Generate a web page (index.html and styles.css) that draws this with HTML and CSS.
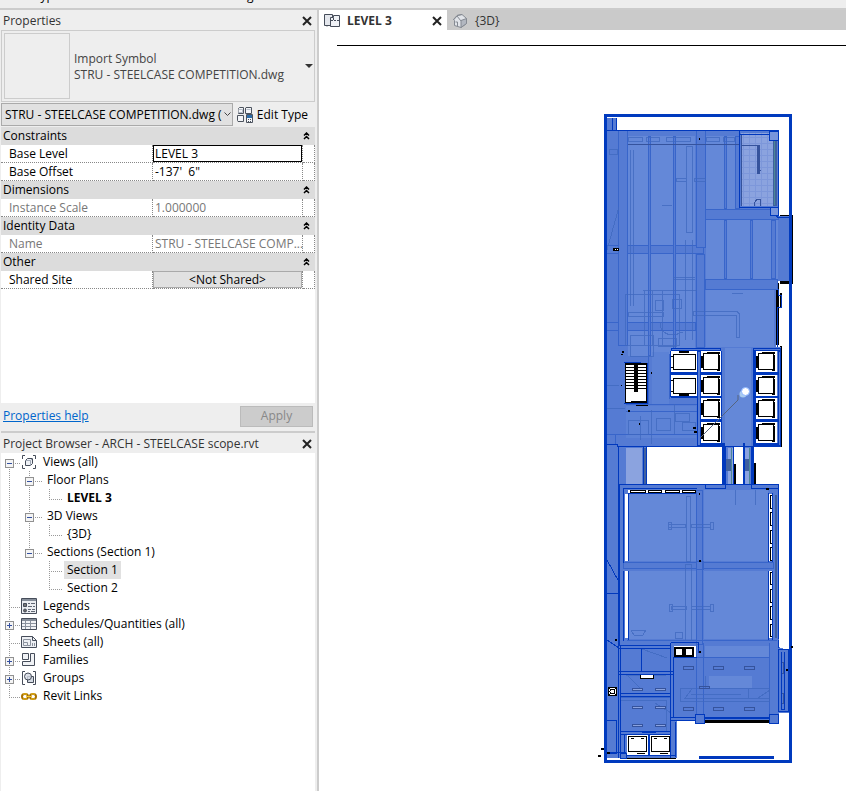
FILE: index.html
```html
<!DOCTYPE html>
<html lang="en">
<head>
<meta charset="utf-8">
<title>LEVEL 3</title>
<link rel="stylesheet" href="styles.css">
</head>
<body>
<header class="ribbon"><span>Type</span><span>ing</span></header>
<div class="workspace">
<aside class="side">
  <section class="properties">
    <div class="bar"><h2>Properties</h2><button class="close" aria-label="Close properties"><svg viewBox="0 0 10 10"><path d="M1 1 9 9M9 1 1 9"/></svg></button></div>
    <button class="preview">
      <span class="thumb"></span>
      <span class="preview-text">Import Symbol<br>STRU - STEELCASE COMPETITION.dwg</span>
      <svg class="arrow" viewBox="0 0 8 4"><path d="M0 0h8L4 4z"/></svg>
    </button>
    <div class="type-row">
      <select class="type-select" aria-label="Type"><option>STRU - STEELCASE COMPETITION.dwg (</option></select>
      <button class="edit-type">
        <svg viewBox="0 0 16 16" fill="#f4f6f9" stroke="#4c535e"><path d="M1.500 1.500l1-1h4v6h-5zM9 .5h5.500v6H8.500V1zM.5 8.500h6v6H1l-.5-1z"/><path d="M1.500 2.500h4v3h-4M9.500 2.500h4" stroke="#b8bfca"/><path d="M9.500 7.500h6v8h-6z"/><path d="M10 8h5v3h-5z" fill="#2d6ca8" stroke="none"/><path d="M11 12.500h1m1 0h1m-3 2h1m1 0h1"/></svg>
        Edit Type</button>
    </div>
    <table class="grid">
      <colgroup><col class="c-name"><col class="c-value"><col class="c-end"></colgroup>
      <tbody>
      <tr class="group"><th colspan="2">Constraints</th><td><button aria-label="Collapse"><svg viewBox="0 0 7 8"><path d="M1 3.500 3.500 1 6 3.500M1 7l2.500-2.500L6 7"/></svg></button></td></tr>
      <tr><th><label for="level">Base Level</label></th><td><input id="level" class="active" value="LEVEL 3"></td><td></td></tr>
      <tr><th><label for="offset">Base Offset</label></th><td><input id="offset" value="-137'&nbsp; 6&quot;"></td><td></td></tr>
      <tr class="group"><th colspan="2">Dimensions</th><td><button aria-label="Collapse"><svg viewBox="0 0 7 8"><path d="M1 3.500 3.500 1 6 3.500M1 7l2.500-2.500L6 7"/></svg></button></td></tr>
      <tr class="dim"><th>Instance Scale</th><td><span>1.000000</span></td><td></td></tr>
      <tr class="group"><th colspan="2">Identity Data</th><td><button aria-label="Collapse"><svg viewBox="0 0 7 8"><path d="M1 3.500 3.500 1 6 3.500M1 7l2.500-2.500L6 7"/></svg></button></td></tr>
      <tr class="dim"><th>Name</th><td><span>STRU - STEELCASE COMP...</span></td><td></td></tr>
      <tr class="group"><th colspan="2">Other</th><td><button aria-label="Collapse"><svg viewBox="0 0 7 8"><path d="M1 3.500 3.500 1 6 3.500M1 7l2.500-2.500L6 7"/></svg></button></td></tr>
      <tr><th>Shared Site</th><td><button class="shared">&lt;Not Shared&gt;</button></td><td></td></tr>
      </tbody>
    </table>
    <div class="blank"></div>
    <div class="foot"><a href="#help">Properties help</a><button class="apply" disabled>Apply</button></div>
  </section>
  <section class="browser">
    <div class="bar"><h2>Project Browser - ARCH - STEELCASE scope.rvt</h2><button class="close" aria-label="Close project browser"><svg viewBox="0 0 10 10"><path d="M1 1 9 9M9 1 1 9"/></svg></button></div>
    <ul class="tree">
      <li class="row"><span class="cell first"><button class="box minus" aria-label="Collapse"></button></span><svg class="icon" viewBox="0 0 16 16"><path d="M4 1.500H1.500V5M1.500 11v3.500H4M12 1.500h2.500V5m0 6v3.500H12"/><path d="m4.500 6.500 2-2h5v5l-2 2h-5z" fill="#eef1f6"/><path d="M4.500 6.500h5v5m0-5 2-2" stroke="#a3abb8"/></svg><span class="label">Views (all)</span></li>
      <li class="row"><span class="cell v"></span><span class="cell wide v"><button class="box minus" aria-label="Collapse"></button></span><span class="label">Floor Plans</span></li>
      <li class="row"><span class="cell v"></span><span class="cell v"></span><span class="cell wide end"></span><span class="label"><b>LEVEL 3</b></span></li>
      <li class="row"><span class="cell v"></span><span class="cell wide v"><button class="box minus" aria-label="Collapse"></button></span><span class="label">3D Views</span></li>
      <li class="row"><span class="cell v"></span><span class="cell v"></span><span class="cell wide end"></span><span class="label">{3D}</span></li>
      <li class="row"><span class="cell v"></span><span class="cell wide end"><button class="box minus" aria-label="Collapse"></button></span><span class="label">Sections (Section 1)</span></li>
      <li class="row"><span class="cell v"></span><span class="cell"></span><span class="cell wide tee"></span><span class="label picked">Section 1</span></li>
      <li class="row"><span class="cell v"></span><span class="cell"></span><span class="cell wide end"></span><span class="label">Section 2</span></li>
      <li class="row"><span class="cell tee"></span><svg class="icon" viewBox="0 0 16 16"><path d="M.5.500h15v15H.5z" fill="#eceef2"/><path d="M1 1h14v2H1z" fill="#858d99" stroke="none"/><path d="M2.500 5.500h3v3h-3z" fill="#777"/><circle cx="4" cy="12.500" r="1.500" fill="#666"/><path d="M7 5.500h2m1 0h4M7 8.500h4m1 0h2M7 11.500h3m1 0h3M7 13.500h2m1 0h4" stroke="#606774"/></svg><span class="label">Legends</span></li>
      <li class="row"><span class="cell v"><button class="box plus" aria-label="Expand"></button></span><svg class="icon" viewBox="0 0 16 16"><path d="M.5 2.500h15v11H.5z" fill="#f2f3f6"/><path d="M1 3h14v2H1z" fill="#858d99" stroke="none"/><path d="M1 7.500h14M1 10.500h14M4.500 5v8M9.500 5v8" stroke="#8b929e"/></svg><span class="label">Schedules/Quantities (all)</span></li>
      <li class="row"><span class="cell tee"></span><svg class="icon" viewBox="0 0 16 16"><path d="M.5 2.500h11l4 4v7H.5z" fill="#eef0f4"/><path d="M11.500 2.500v4h4"/><path d="M2.500 5.500h7v6h-3v-3h-4zM2.500 8.500v3h4M11.500 9v3M13.500 9v3" stroke="#8b929e"/></svg><span class="label">Sheets (all)</span></li>
      <li class="row"><span class="cell v"><button class="box plus" aria-label="Expand"></button></span><svg class="icon" viewBox="0 0 16 16"><path d="M1.500 1.500h6v6h-6zM9.500 1.500h4v12h-12v-4h8z" fill="#f0f2f5"/></svg><span class="label">Families</span></li>
      <li class="row"><span class="cell v"><button class="box plus" aria-label="Expand"></button></span><svg class="icon" viewBox="0 0 16 16"><path d="M4 1.500H1.500v13H4M12 1.500h2.500v13H12"/><path d="M6.500 6.500h6v6h-6z" fill="#d4dae3"/><circle cx="7" cy="6.500" r="3.500" fill="#d4dae3" fill-opacity=".8"/></svg><span class="label">Groups</span></li>
      <li class="row"><span class="cell end"></span><svg class="icon" viewBox="0 0 16 16"><rect x="1" y="6" width="6" height="5" rx="2.500" stroke="#a87000" stroke-width="2"/><rect x="9" y="6" width="6" height="5" rx="2.500" stroke="#a87000" stroke-width="2"/><path d="M2 6h4M10 6h4M2 11h4M10 11h4M5 8.500h6" stroke="#f6c829"/></svg><span class="label">Revit Links</span></li>
    </ul>
  </section>
</aside>
<main class="view">
  <nav class="tabs">
    <div class="tab current"><svg class="icon" viewBox="0 0 16 16"><path d="M.5 1.500h8v11h-8z" fill="#e4e7ed"/><path d="M6.500 4.500h3v-2h6v11h-9z" fill="#f0f2f6"/><path d="M7 7.500h2m1 0h2m1 0h2M9.500 5v2M3 12.500v1" /></svg><button class="tab-name"><b>LEVEL 3</b></button><button class="close" aria-label="Close view"><svg viewBox="0 0 10 10"><path d="M1 1 9 9M9 1 1 9"/></svg></button></div>
    <div class="tab"><svg class="icon house" viewBox="0 0 16 16"><path d="M1.500 6.500 5 2.500l5-1 4.500 4v5L9 14.500l-6.500-2v-5z" fill="#e1e4e9"/><path d="m9 7.500 5.500-2v5L9 14.500z" fill="#b2b7c0"/><path d="m1.500 7 3.500-4 4 5M5 2.500l5-1M5.500 13V9H3.500"/></svg><button class="tab-name">{3D}</button></div>
  </nav>
  <svg class="plan" viewBox="319 30 527 761" preserveAspectRatio="xMinYMin meet" shape-rendering="crispEdges" role="img" aria-label="Level 3 floor plan">
    <defs>
      <pattern id="tile" width="6" height="6" patternUnits="userSpaceOnUse"><path d="M0 5.500h6M5.500 0v6" stroke="#7d97da" fill="none"/></pattern>
      <pattern id="tread" width="10" height="3" patternUnits="userSpaceOnUse"><path d="M0 1.500h10" stroke="#000"/></pattern>
      <g id="car"><path d="M0 0h21v22H0z" fill="#fff"/><path d="M2.500 2.500h15v16h-15zM17.500 4.500h1v13h-1M6 1.500h10" fill="none" stroke="#000"/><path d="M0 5h2v12H0zM16 1h3v2h-3zM16 18h3v2h-3z"/></g>
      <g id="lift"><path d="M0 0h21v20H0z" fill="#fff"/><path d="M1.500 1.500h18v15h-18zM4 3.500h3M14 3.500h3M10 18.500h8" fill="none" stroke="#000"/></g>
      <g id="wide-car"><path d="M0 0h26v21H0z" fill="#fff"/><path d="M2.500 3.500h22v15h-22zM0 5.500h3M0 16.500h3" fill="none" stroke="#000"/></g>
    </defs>
    <path d="M337 45.500h520" stroke="#000"/>
    <!-- black edges behind the slab -->
    <path d="M780 215h13v69h-13zM775 283h4v62h-4zM780 293h2v15h-2zM780 346h2v102h-2zM647 445h24v4h-24zM676 721v38h-50v-2h49v-36zM705 719h66v4h-66z"/>
    <!-- slabs -->
    <path d="M607 118h10v12h162v86h12v65h-15v66h5v100h-28v38h26v162l10 4v62h-10v7H677v38h-70z" fill="#557bd3"/>
    <path d="M647 447h76v37h-76zM733 447h11v37h-11zM755 447h34v37h-34z" fill="#fff"/>
    <g fill="#6488d8">
      <path d="M628 136h20v220h-20zM650 136h23v220h-23zM675 136h20v218h-20zM706 136h30v210h-30zM706 217h72v62h-72zM706 290h68v57h-68zM725 348h26v98h-26z"/>
      <path d="M628 494h68v67h-68zM704 490h64v71h-64zM628 571h68v68h-68zM704 571h64v68h-64zM705 646h64v11h-64zM709 676h43v12h-43z"/>
    </g>
    <path d="M626 406h70v32h-70zM652 352h17v52h-17z" fill="#5c82d6"/>
    <g fill="#8ba3df"><path d="M741 133h35v73h-35zM626 448h16v36h-16zM728 448h5v36h-5zM745 448h5v36h-5z"/></g>
    <path d="M741 133h34v73h-34z" fill="url(#tile)"/>
    <!-- floor beams and faint linework -->
    <g fill="#557bd3" stroke="#3865ca">
      <path d="M606.500 245.500h97v8h-97zM606.500 322.500h89v8h-89zM705.500 209.500h73v10h-73zM705.500 279.500h72v10h-72z"/>
      <path d="M696.500 130.500h9v117h-9zM696.500 254.500h8v93h-8zM696.500 490.500h6v154h-6zM623.500 562.500h73v6h-73zM703.500 562.500h70v6h-70zM696.500 561.500h7v8h-7z"/>
      <path d="M618.500 130.500h9v215h-9zM648.500 136.500h2v219h-2zM673.500 136.500h2v219h-2zM724.500 136.500h2v72h-2zM724.500 220.500h2v58h-2zM750.500 220.500h2v58h-2zM735.500 136.500h4v72h-4zM771.500 220.500h4v58h-4z"/>
    </g>
    <g fill="none" stroke="#3865ca"><path d="M648.500 356v48M626 404.500h71M626 411.500h71M607 434.500h90M615.500 434v10M669.500 354v45M696.500 643v73M703.500 643v73M769.500 643v73M627 640.500h150M675 657.500h95M621 697.500h50"/></g>
    <g fill="none" stroke="#3f68bf" stroke-opacity=".75">
      <path d="M628.500 137.500h14v4h-14zM646.500 137.500h13v4h-13zM666.500 137.500h24v4h-24zM706.500 137.500h13v4h-13zM723.500 137.500h11v4h-11z"/>
      <path d="M630.500 150v156M633.500 150v156M686.500 146.500h6v86h-6zM676.500 178.500h10v3h-10zM694.500 178.500h11v3h-11zM662 205.500h10M685.500 240v100M692.500 240v100"/>
      <path d="M693 311.500h44l2 2v24h-3v-22h-43zM643 290.500h54M673 277.500h22M673 279.500h22M732 293.500h11M607 250l12-43M609 149h8v5h-8z"/>
      <path d="M625.500 294.500h54v51h-54zM644.500 291v55M652.500 291v55M662.500 291v55M672 299h9v9h-9zM655 300h8v10h-8zM628 312h35v4h-35zM660 322c0 12 10 16 23 10M630 335h23v21h-23zM658 338h18v8h-18z"/>
      <path d="M628 420h20v14h-20zM651 410v34M656 418h14v12h-14zM675 413h14v8h-14zM682 422h13v8h-13zM640 416v24M674 404v30M607 385h12M607 408h18"/>
      <path d="M686.500 496.500h4v65h-4zM685.500 564.500h6v76h-6zM668.500 524.500h17v3h-17zM691.500 524.500h19v3h-19zM668.500 522.500h3v7h-3zM710.500 522.500h3v7h-3zM671.500 606.500h15v3h-15zM691.500 606.500h19v3h-19zM669.500 604.500h3v7h-3zM710.500 604.500h3v7h-3z"/>
      <path d="M735.500 490v15M755.500 490v15M675.500 632h7v6h-7zM631 630h15l-3 5h-9zM680.500 688.500h89v13h-89zM692 689l-7 9h73l12-8M685 698h84M748.500 689v10M691 694h50M705 676v12"/>
      <path d="M642 649l25 9M627 675l16 16M655 703l16 10M626 675h40M621 700h45v32"/>
    </g>
    <g fill="none" stroke="#35539d">
      <path d="M628 144.500h112M741 145.500h17v27M741 135v71M754 206c0-4 2-7 6-7v7" /><path d="M757 145h2v28h-2zM759 170h2" />
      <path d="M683.500 666.500h10v3h-10zM713.500 666.500h10v3h-10zM744.500 666.500h10v3h-10zM683.500 707.500h10v3h-10zM713.500 707.500h10v3h-10zM744.500 707.500h10v3h-10zM699.500 686.500h10v2h-10zM781.500 662.500h2v11h-2zM781.500 693.500h2v10h-2z"/>
      <path d="M632.500 688.500h10v2h-10zM655.500 688.500h10v2h-10zM632.500 706.500h10v2h-10zM655.500 706.500h10v2h-10zM632.500 724.500h10v2h-10zM655.500 724.500h10v2h-10z" fill="#8ba3df"/>
    </g>
    <path d="M643 448h3v36h-3zM773 135h4v71h-4zM775 495h2v143h-2zM726 459h5v12h-5zM745 459h4v12h-4z" fill="#3f609f"/>
    <path d="M731.500 448v36M749.500 448v36M774.500 137v68" stroke="#4b8797"/>
    <!-- elevators and stairs -->
    <use href="#wide-car" x="671" y="351"/><use href="#wide-car" x="671" y="375"/>
    <path d="M679 351h10v2h-10zM679 394h10v2h-10z"/>
    <use href="#car" x="701" y="351"/><use href="#car" x="701" y="375"/><use href="#car" x="701" y="398"/><use href="#car" x="701" y="422"/>
    <use href="#car" x="756" y="351"/><use href="#car" x="756" y="375"/><use href="#car" x="756" y="398"/><use href="#car" x="756" y="422"/>
    <use href="#lift" x="627" y="735"/><use href="#lift" x="650" y="735"/>
    <path d="M625 363h22v40h-22z" fill="#fff"/><path d="M626 364h20v26h-20z" fill="url(#tread)"/><path d="M634 364h4v28h-4z"/><path d="M625.500 363.500h21v39h-21zM631 401.500h15" fill="none" stroke="#000"/><path d="M624 362.500h17M624 403.500h24M647.500 363v40" fill="none" stroke="#0038bd"/>
    <!-- window openings -->
    <path d="M628 490h68v3h-68zM625 494h3v67h-3zM625 571h3v67h-3zM768 494h5v67h-5zM768 571h5v67h-5z" fill="#fff"/>
    <path d="M630.500 490.500h15v2h-15zM648.500 490.500h13v2h-13zM665.500 490.500h14v2h-14zM682.500 490.500h13v2h-13zM770.500 495.500h2v13h-2zM770.500 512.500h2v13h-2zM770.500 530.500h2v13h-2zM770.500 547.500h2v13h-2zM770.500 572.500h2v12h-2zM770.500 589.500h2v13h-2zM770.500 606.500h2v13h-2zM770.500 624.500h2v12h-2z" fill="none" stroke="#000"/>
    <path d="M640 674h14v5h-14zM674 646h22v11h-22zM608 687h9v9h-9z" fill="#fff"/>
    <path d="M640.500 674.500h13v4h-13zM608.500 687.500h8v8h-8zM609 688l7 7m0-7-7 7" fill="none" stroke="#000"/><path d="M675 648h8v8h-8zM685 648h8v8h-8z" fill="none" stroke="#000" stroke-width="2"/>
    <circle cx="612.500" cy="691.500" r="2.500" fill="#fff" stroke="#000"/>
    <!-- primary walls -->
    <g fill="none" stroke="#0038bd">
      <path d="M607 130.500h171.500V216M739.500 131v76h35v8l3 2h14M616.500 118v12M612.500 118v12M740 134.500h38M778.500 289v6h3v12h-4v40M607 444.500h10v2h164M618.500 447v311M643.500 447v37M646.500 447v37M619 484.500h159V639M623.500 488.500h73M623.500 488v75M627.500 493h68.500M628.500 493v68M628.500 571v69M623.500 571v70M607 560l12 22M607 593.500h12M768.500 493v69M772.500 493v69M768.500 571v69M772.500 571v69M607 640l12 8M607 720.500h9v33h-9M641.500 649v23M778.500 649.500h10v62h-10zM778 640v8M781.500 652v57h3v-57M774 488h4M705 484v4h20v-4M751 484v4h26"/>
      <path d="M619 645.500h52M619 648.500h52M619 671.500h54M619 674.500h54M620 693.500h51M620 696.500h51M620 731.500h51M620 734.500h51M670.500 643v74M673.500 657v60M671 642.500h27v10M673 657.500h24M671 717.500h107M671 720.500h34M618.500 640v118M620.500 645v113M624.500 734v22M670.500 717v41M675.500 722v35M606 752.500h20M624 755.500h51M771 720.500h7"/>
    </g>
    <path d="M769.500 131.500h9v9h-9zM770.500 207.500h8v8h-8z" fill="#7895dc" stroke="#0038bd"/>
    <path d="M671 348h50v3h-50zM753 348h28v3h-28zM697 351h4v95h-4zM721 351h1v95h-1zM753 351h3v95h-3zM778 351h3v95h-3zM670 351h1v46h-1zM671 372h26v3h-26zM671 396h26v2h-26zM701 372h21v3h-21zM701 396h21v2h-21zM701 419h21v3h-21zM701 443h24v3h-24zM754 372h24v3h-24zM754 396h24v2h-24zM754 419h24v3h-24zM754 443h27v3h-27zM722 446h4v39h-4zM733 447h1v37h-1zM743 443h2v41h-2zM751 447h3v37h-3zM618 485h2v160h-2zM648 734h2v22h-2zM705 718h65v1h-65zM699 756h75v3h-75zM642 731h14v2h-14z" fill="#0038bd"/>
    <path d="M698 352h2v93h-2zM779 352h1v93h-1zM672 349h48v1h-48zM754 349h26v1h-26z" fill="#557bd3"/>
    <path d="M695.500 714.500h9v9h-9zM769.500 714.500h9v9h-9zM620.500 753.500h6v5h-6z" fill="#557bd3" stroke="#0038bd"/>
    <path d="M605.500 115.500h185v646h-185z" fill="none" stroke="#003abe" stroke-width="3"/>
    <path d="M734 464h2v20h-2zM754 463h2v21h-2zM613 248h6v3h-6zM699 138h1v2h-1zM621 354h2v1h-2zM622 351h2v2h-2zM651 372h1v2h-1zM621 385h1v1h-1zM636 405h12v1h-12zM628 410h2v2h-2zM639 423h1v2h-1zM693 427h3v2h-3zM694 431h3v2h-3zM699 493h1v2h-1zM699 560h2v2h-2zM766 488h3v2h-3zM615 639h2v2h-2zM699 651h2v2h-2zM786 669h2v2h-2zM601 748h3v2h-3zM598 755h3v2h-3zM607 752h3v2h-3zM791 646h2v2h-2z"/>
    <path d="M615 249h1v1h-1zM617 249h1v1h-1z" fill="#fff"/>
    <path d="m700 438 38-38v-5" fill="none" stroke="#56647e" shape-rendering="auto"/>
    <g shape-rendering="auto"><circle cx="743" cy="394" r="3.500" fill="#a9cbef"/><circle cx="745.500" cy="391.500" r="4" fill="#fff" stroke="#8ab4ff"/></g>
  </svg>
</main>
</div>
</body>
</html>
```
FILE: styles.css
```css
* { box-sizing: border-box; }
body {
  margin: 0;
  min-height: 100vh;
  display: flex;
  flex-direction: column;
  background: #fff;
  color: #000;
  font: 12px/18px "Open Sans", "Noto Sans", sans-serif;
}
button, input, select { font: inherit; color: inherit; border: 0; padding: 0; margin: 0; background: none; border-radius: 0; }
h2 { margin: 0; font: inherit; }
svg { flex: none; }

.ribbon {
  height: 10px;
  overflow: hidden;
  display: flex;
  gap: 176px;
  padding-left: 34px;
  align-items: flex-end;
  line-height: 24px;
  background: #eee;
  border-bottom: 2px solid #ccc;
}
.workspace { flex: 1; display: grid; grid-template-columns: 319px 1fr; }

.side { display: flex; flex-direction: column; background: #eee; border-right: 2px solid #ccc; padding: 0 2px 0 1px; }
.bar { display: flex; align-items: center; justify-content: space-between; height: 20px; padding: 1px 2px 0; color: #333; }
.close { width: 12px; height: 16px; display: grid; place-items: center; }
.close svg { width: 10px; height: 10px; fill: none; stroke: #222; stroke-width: 2; }

.preview { width: 100%; height: 72px; display: flex; align-items: center; text-align: left; border: 1px solid #ccc; padding: 0 1px 0 2px; color: #444; line-height: 16px; }
.thumb { width: 66px; height: 66px; border: 1px solid #ccc; margin-right: 4px; }
.preview-text { flex: 1; white-space: nowrap; padding-top: 2px; }
.arrow { width: 8px; height: 4px; fill: #333; }

.type-row { display: flex; justify-content: space-between; align-items: center; padding: 1px 7px 1px 0; height: 25px; }
.type-select {
  appearance: none;
  width: 232px;
  height: 23px;
  padding: 0 0 0 3px;
  border: 1px solid #aaa;
  background: #e1e1e1 url("data:image/svg+xml,%3Csvg xmlns='http://www.w3.org/2000/svg' width='7' height='5'%3E%3Cpath d='M.5 .5l3 3 3-3' fill='none' stroke='%23444'/%3E%3C/svg%3E") no-repeat right 1px center;
}
.edit-type { display: flex; align-items: center; gap: 4px; white-space: nowrap; }
.edit-type svg { width: 16px; height: 16px; }

.grid { width: 100%; table-layout: fixed; border-collapse: separate; border-spacing: 0; background: #fff; }
.c-name { width: 152px; }
.c-end { width: 12px; }
.grid tr { height: 18px; }
.grid th, .grid td { height: 18px; padding: 0; font-weight: 400; text-align: left; line-height: 16px; border-bottom: 1px dotted #888; border-right: 1px dotted #888; }
.grid th { padding-left: 8px; }
.grid td span { display: block; padding-left: 2px; white-space: nowrap; }
.grid input { display: block; width: 100%; height: 17px; padding: 0 2px; }
.grid input.active { padding: 0 1px; border: 1px solid #000; }
.grid .group th, .grid .group td { background: #dcdcdc; border: 0; }
.grid .group th { padding-left: 2px; }
.group button { display: block; height: 16px; }
.group svg { display: block; width: 7px; height: 8px; fill: none; stroke: #000; stroke-width: 1.5; }
.dim { color: #777; }
.grid .shared { display: block; width: 100%; height: 17px; line-height: 15px; background: #e1e1e1; border: 1px solid #aaa; text-align: center; }

.blank { height: 114px; background: #fff; }
.foot { height: 28px; display: flex; align-items: center; justify-content: space-between; padding: 0 2px 2px; }
.foot a { color: #06c; }
.apply { width: 73px; height: 21px; background: #ccc; border: 1px solid #bbb; color: #888; }

.browser { flex: 1; display: flex; flex-direction: column; border-top: 2px solid #ccc; }
.tree { flex: 1; margin: 0; padding: 0; list-style: none; background: #fff; }
.row { display: flex; height: 18px; align-items: stretch; }
.icon { width: 16px; height: 16px; align-self: center; fill: none; stroke: #464d5a; }
.row .icon { margin-right: 3px; }
.label { padding: 0 3px; white-space: nowrap; }
.picked { background: #e1e1e1; }
.cell {
  --v: repeating-linear-gradient(to bottom, #999 0 1px, transparent 1px 2px);
  --h: repeating-linear-gradient(to right, #999 0 1px, transparent 1px 2px);
  flex: none;
  width: 20px;
  padding: 6px 0 0 4px;
  background-repeat: no-repeat;
}
.wide { width: 23px; }
.first { background-image: var(--h), var(--v); background-size: 12px 1px, 1px 8px; background-position: 8px 10px, 8px 10px; }
.v { background-image: var(--v); background-size: 1px 18px; background-position: 8px 0; }
.v:has(.box), .tee { background-image: var(--h), var(--v); background-size: 14px 1px, 1px 18px; background-position: 8px 10px, 8px 0; }
.end { background-image: var(--h), var(--v); background-size: 14px 1px, 1px 10px; background-position: 8px 10px, 8px 0; }
.box {
  display: block;
  width: 9px;
  height: 9px;
  border: 1px solid #919191;
  background: linear-gradient(#3450a0, #3450a0) center / 5px 1px no-repeat, #f4f4f4;
}
.plus { background: linear-gradient(#3450a0, #3450a0) center / 5px 1px no-repeat, linear-gradient(#3450a0, #3450a0) center / 1px 5px no-repeat, #f4f4f4; }

.view { min-width: 0; display: flex; flex-direction: column; }
.tabs { display: flex; height: 20px; background: #cacaca; color: #333; }
.tab { display: flex; align-items: center; padding: 1px 4px 0 5px; }
.tab-name { padding: 0 7px; }
.current { width: 128px; background: #fff; }
.current .tab-name { flex: 1; text-align: left; }
.house { stroke: #858a92; }
.plan { display: block; width: 100%; }
```
